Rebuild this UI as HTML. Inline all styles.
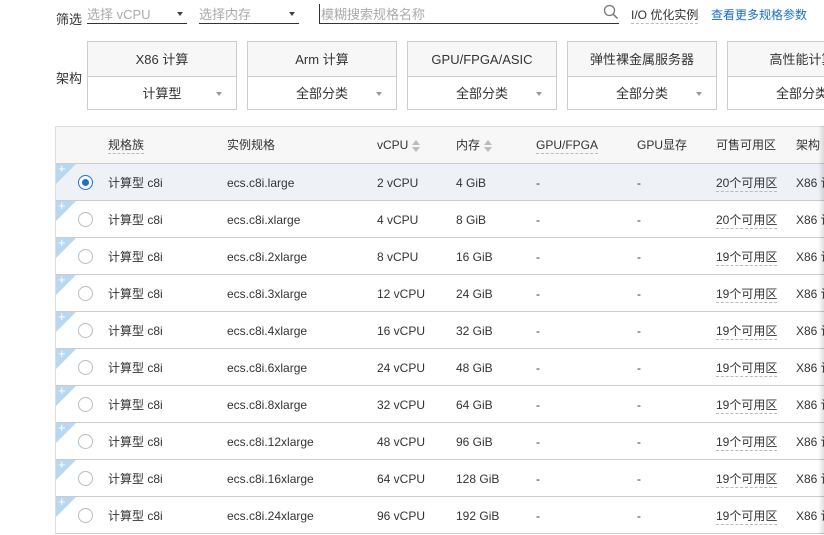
<!DOCTYPE html>
<html><head><meta charset="utf-8"><style>
*{margin:0;padding:0;box-sizing:border-box}
body{width:824px;height:534px;overflow:hidden;background:#fff;font-family:"Liberation Sans","Noto Sans CJK SC",sans-serif;font-size:12px;color:#333;position:relative}
.a{position:absolute;white-space:nowrap}
.sel{position:absolute;top:4px;height:20px;border-bottom:1px solid #333;color:#aaa;font-size:13px}
.tri{position:absolute;right:4px;top:8px;width:0;height:0;border-left:3px solid transparent;border-right:3px solid transparent;border-top:4px solid #444}
.box{position:absolute;top:41px;width:150px;height:69px;border:1px solid #ccc}
.box .t{height:35px;background:#f7f7f7;border-bottom:1px solid #ccc;text-align:center;line-height:35px;font-size:13px;color:#333}
.box .b{height:32px;text-align:center;line-height:33px;font-size:13px;color:#333;position:relative}
.box .b i{position:absolute;right:14px;top:15px;border-left:3px solid transparent;border-right:3px solid transparent;border-top:4px solid #999}
.tbl{position:absolute;left:55px;top:126px;width:780px;height:408px;border:1px solid #ddd;border-right:none}
.hd{position:absolute;left:0;top:0;width:100%;height:37px;background:#f7f7f7;border-bottom:1px solid #ccc}
.row{position:absolute;left:0;width:100%;height:37px;border-bottom:1px solid #ccc}
.c{position:absolute;top:0;line-height:38px;white-space:nowrap;font-size:12px;color:#333}
.hd .c{font-size:12px;color:#333;line-height:36px}
.dash{border-bottom:1px dashed #bbb;line-height:15px!important;top:11px}
.row .dash{top:12px}
.corner{position:absolute;left:0;top:0;width:0;height:0;border-top:20px solid #b8d7f0;border-right:20px solid transparent}
.plus{position:absolute;left:2px;top:-2px;color:#fff;font-size:13px;line-height:14px}
.radio{position:absolute;left:22px;top:11px;width:15px;height:15px;border:1px solid #bbb;border-radius:50%;background:#fff}
.radio.on{border-color:#1a73d1}
.radio.on:after{content:"";position:absolute;left:3px;top:3px;width:7px;height:7px;border-radius:50%;background:#1a73d1}
.srt{display:inline-block;vertical-align:middle;margin-left:4px;width:7px;height:12px;position:relative}
.srt:before{content:"";position:absolute;top:0;left:0;border-left:4px solid transparent;border-right:4px solid transparent;border-bottom:5px solid #bbb}
.srt:after{content:"";position:absolute;top:7px;left:0;border-left:4px solid transparent;border-right:4px solid transparent;border-top:5px solid #bbb}
.shadow{position:absolute;right:0;top:126px;width:6px;height:408px;background:linear-gradient(to right,rgba(0,0,0,0),rgba(0,0,0,.12))}
</style></head><body>
<div class="a" style="left:56px;top:9px;font-size:13px;color:#333">筛选</div>
<div class="sel" style="left:87px;width:100px">选择 vCPU<span class="tri"></span></div>
<div class="sel" style="left:199px;width:100px">选择内存<span class="tri"></span></div>
<div class="sel" style="left:319px;width:300px;color:#aaa;border-left:1px solid #333;padding-left:1px">模糊搜索规格名称</div>
<svg class="a" style="left:603px;top:4px" width="16" height="16" viewBox="0 0 16 16"><circle cx="6.5" cy="6.5" r="5" fill="none" stroke="#777" stroke-width="1.3"/><path d="M10.3 10.3L14.5 14.5" stroke="#777" stroke-width="1.5"/></svg>
<div class="a" style="left:631px;top:8px;font-size:12px;color:#333;border-bottom:1px dashed #bbb;line-height:15px">I/O 优化实例</div>
<div class="a" style="left:711px;top:8px;font-size:12px;color:#1a6ec2;line-height:15px">查看更多规格参数</div>
<div class="a" style="left:56px;top:68px;font-size:13px">架构</div>
<div class="box" style="left:87px"><div class="t">X86 计算</div><div class="b">计算型<i></i></div></div>
<div class="box" style="left:247px"><div class="t">Arm 计算</div><div class="b">全部分类<i></i></div></div>
<div class="box" style="left:407px"><div class="t">GPU/FPGA/ASIC</div><div class="b">全部分类<i></i></div></div>
<div class="box" style="left:567px"><div class="t">弹性裸金属服务器</div><div class="b">全部分类<i></i></div></div>
<div class="box" style="left:727px"><div class="t">高性能计算</div><div class="b">全部分类<i></i></div></div>
<div class="tbl">
<div class="hd">
<div class="c dash" style="left:52px">规格族</div>
<div class="c" style="left:171px">实例规格</div>
<div class="c" style="left:321px">vCPU<span class="srt"></span></div>
<div class="c" style="left:400px">内存<span class="srt"></span></div>
<div class="c dash" style="left:480px">GPU/FPGA</div>
<div class="c" style="left:581px">GPU显存</div>
<div class="c" style="left:660px">可售可用区</div>
<div class="c" style="left:740px">架构</div>
</div>
<div class="row" style="top:37px;background:#eef1f6"><div class="corner"></div><div class="plus">+</div><div class="radio on"></div><div class="c" style="left:52px">计算型 c8i</div><div class="c" style="left:171px">ecs.c8i.large</div><div class="c" style="left:321px">2 vCPU</div><div class="c" style="left:400px">4 GiB</div><div class="c" style="left:480px">-</div><div class="c" style="left:581px">-</div><div class="c dash" style="left:660px">20个可用区</div><div class="c" style="left:740px">X86 计</div></div>
<div class="row" style="top:74px"><div class="corner"></div><div class="plus">+</div><div class="radio"></div><div class="c" style="left:52px">计算型 c8i</div><div class="c" style="left:171px">ecs.c8i.xlarge</div><div class="c" style="left:321px">4 vCPU</div><div class="c" style="left:400px">8 GiB</div><div class="c" style="left:480px">-</div><div class="c" style="left:581px">-</div><div class="c dash" style="left:660px">20个可用区</div><div class="c" style="left:740px">X86 计</div></div>
<div class="row" style="top:111px"><div class="corner"></div><div class="plus">+</div><div class="radio"></div><div class="c" style="left:52px">计算型 c8i</div><div class="c" style="left:171px">ecs.c8i.2xlarge</div><div class="c" style="left:321px">8 vCPU</div><div class="c" style="left:400px">16 GiB</div><div class="c" style="left:480px">-</div><div class="c" style="left:581px">-</div><div class="c dash" style="left:660px">19个可用区</div><div class="c" style="left:740px">X86 计</div></div>
<div class="row" style="top:148px"><div class="corner"></div><div class="plus">+</div><div class="radio"></div><div class="c" style="left:52px">计算型 c8i</div><div class="c" style="left:171px">ecs.c8i.3xlarge</div><div class="c" style="left:321px">12 vCPU</div><div class="c" style="left:400px">24 GiB</div><div class="c" style="left:480px">-</div><div class="c" style="left:581px">-</div><div class="c dash" style="left:660px">19个可用区</div><div class="c" style="left:740px">X86 计</div></div>
<div class="row" style="top:185px"><div class="corner"></div><div class="plus">+</div><div class="radio"></div><div class="c" style="left:52px">计算型 c8i</div><div class="c" style="left:171px">ecs.c8i.4xlarge</div><div class="c" style="left:321px">16 vCPU</div><div class="c" style="left:400px">32 GiB</div><div class="c" style="left:480px">-</div><div class="c" style="left:581px">-</div><div class="c dash" style="left:660px">19个可用区</div><div class="c" style="left:740px">X86 计</div></div>
<div class="row" style="top:222px"><div class="corner"></div><div class="plus">+</div><div class="radio"></div><div class="c" style="left:52px">计算型 c8i</div><div class="c" style="left:171px">ecs.c8i.6xlarge</div><div class="c" style="left:321px">24 vCPU</div><div class="c" style="left:400px">48 GiB</div><div class="c" style="left:480px">-</div><div class="c" style="left:581px">-</div><div class="c dash" style="left:660px">19个可用区</div><div class="c" style="left:740px">X86 计</div></div>
<div class="row" style="top:259px"><div class="corner"></div><div class="plus">+</div><div class="radio"></div><div class="c" style="left:52px">计算型 c8i</div><div class="c" style="left:171px">ecs.c8i.8xlarge</div><div class="c" style="left:321px">32 vCPU</div><div class="c" style="left:400px">64 GiB</div><div class="c" style="left:480px">-</div><div class="c" style="left:581px">-</div><div class="c dash" style="left:660px">19个可用区</div><div class="c" style="left:740px">X86 计</div></div>
<div class="row" style="top:296px"><div class="corner"></div><div class="plus">+</div><div class="radio"></div><div class="c" style="left:52px">计算型 c8i</div><div class="c" style="left:171px">ecs.c8i.12xlarge</div><div class="c" style="left:321px">48 vCPU</div><div class="c" style="left:400px">96 GiB</div><div class="c" style="left:480px">-</div><div class="c" style="left:581px">-</div><div class="c dash" style="left:660px">19个可用区</div><div class="c" style="left:740px">X86 计</div></div>
<div class="row" style="top:333px"><div class="corner"></div><div class="plus">+</div><div class="radio"></div><div class="c" style="left:52px">计算型 c8i</div><div class="c" style="left:171px">ecs.c8i.16xlarge</div><div class="c" style="left:321px">64 vCPU</div><div class="c" style="left:400px">128 GiB</div><div class="c" style="left:480px">-</div><div class="c" style="left:581px">-</div><div class="c dash" style="left:660px">19个可用区</div><div class="c" style="left:740px">X86 计</div></div>
<div class="row" style="top:370px"><div class="corner"></div><div class="plus">+</div><div class="radio"></div><div class="c" style="left:52px">计算型 c8i</div><div class="c" style="left:171px">ecs.c8i.24xlarge</div><div class="c" style="left:321px">96 vCPU</div><div class="c" style="left:400px">192 GiB</div><div class="c" style="left:480px">-</div><div class="c" style="left:581px">-</div><div class="c dash" style="left:660px">19个可用区</div><div class="c" style="left:740px">X86 计</div></div>
</div>
<div class="shadow"></div>
</body></html>
